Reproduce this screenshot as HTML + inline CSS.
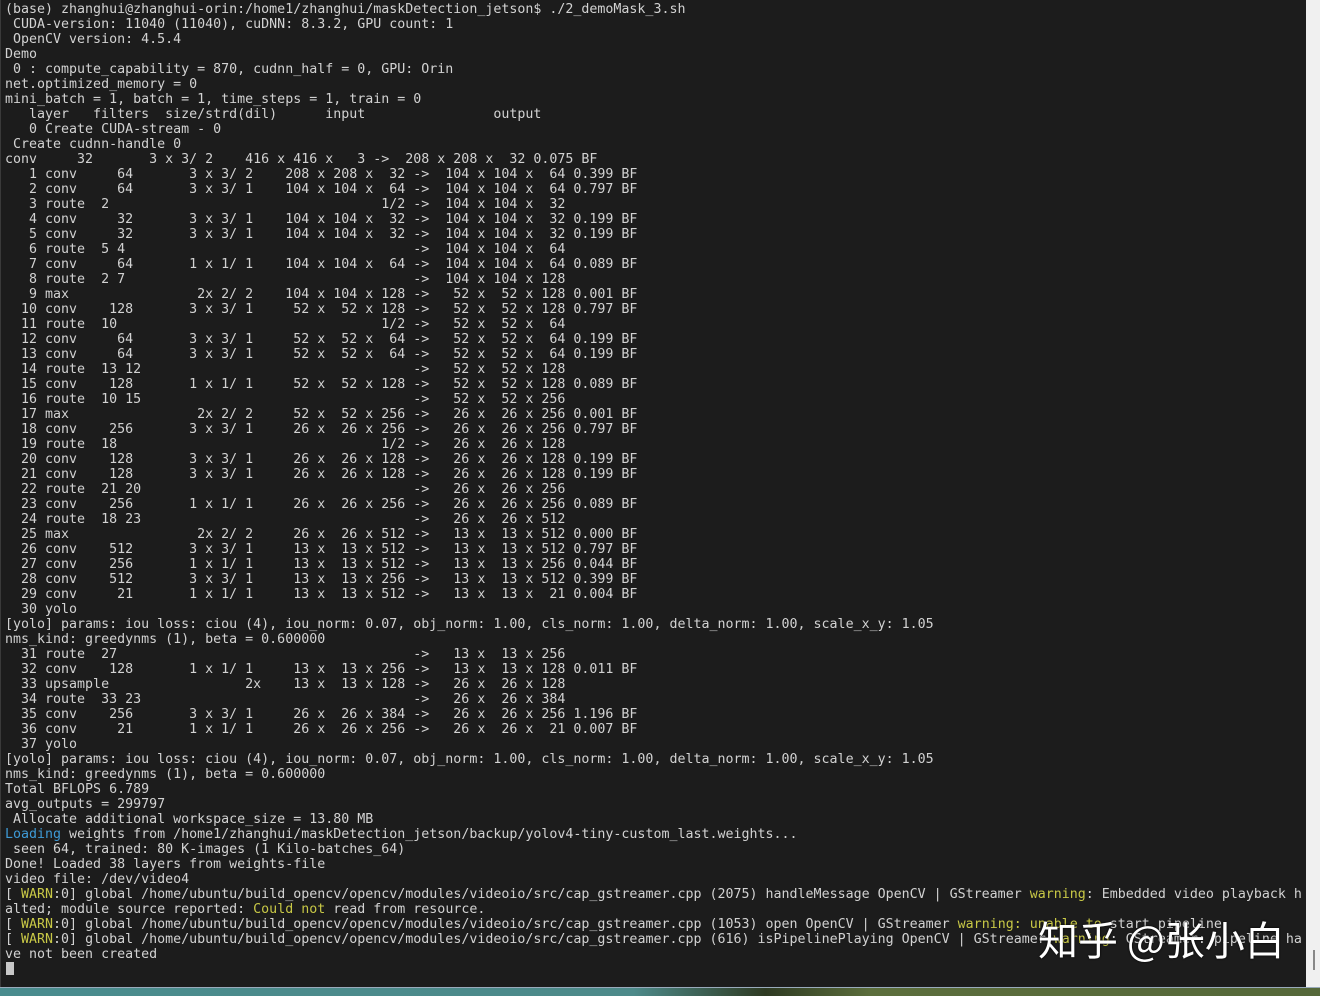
<!DOCTYPE html>
<html><head><meta charset="utf-8"><style>
html,body{margin:0;padding:0;background:#1c1c1c;width:1320px;height:995px;overflow:hidden}
#t{position:absolute;left:0;top:0;width:1306px;height:987px;background:#1c1c1c;border-left:1px solid #3a3a3a;box-sizing:border-box}
#c{position:absolute;left:4px;top:2px;font-family:"DejaVu Sans Mono","Liberation Mono",monospace;font-size:13.3px;line-height:15px;color:#d2d2d2;white-space:pre}
.l{position:relative;height:15px}
s{position:absolute;top:0;text-decoration:none}
.y{color:#c8c846}.b{color:#3e9ad6}
#sb{position:absolute;left:1306px;top:0;width:14px;height:987px;background:#f0f0f0}
#th{position:absolute;left:1313px;top:950px;width:2px;height:20px;background:#888}
#bot{position:absolute;left:0;top:987px;width:1320px;height:8px;background:linear-gradient(90deg,#4a8c8e 0,#4d8a8a 48%,#2e3a22 58%,#5c6e3c 66%,#55683a 100%);border-top:1px solid #9ab}
#cur{position:absolute;left:5px;top:962px;width:8px;height:13px;background:#c8c8c8}
#wm{position:absolute;left:1038px;top:909px;font-family:"Noto Sans CJK SC","WenQuanYi Zen Hei",sans-serif;font-size:40px;color:#fff;white-space:pre;text-shadow:0 0 2px #000}
</style></head><body>
<div id="t">
<div id="c"><div class="l">(base) zhanghui@zhanghui-orin:/home1/zhanghui/maskDetection_jetson$ ./2_demoMask_3.sh</div><div class="l"> CUDA-version: 11040 (11040), cuDNN: 8.3.2, GPU count: 1</div><div class="l"> OpenCV version: 4.5.4</div><div class="l">Demo</div><div class="l"> 0 : compute_capability = 870, cudnn_half = 0, GPU: Orin</div><div class="l">net.optimized_memory = 0</div><div class="l">mini_batch = 1, batch = 1, time_steps = 1, train = 0</div><div class="l">   layer<s style="left:11ch">filters</s><s style="left:20ch">size/strd(dil)</s><s style="left:40ch">input</s><s style="left:61ch">output</s></div><div class="l">   0 Create CUDA-stream - 0</div><div class="l"> Create cudnn-handle 0</div><div class="l">conv     32       3 x 3/ 2    416 x 416 x   3 ->  208 x 208 x  32 0.075 BF</div><div class="l">   1 conv     64       3 x 3/ 2    208 x 208 x  32 ->  104 x 104 x  64 0.399 BF</div><div class="l">   2 conv     64       3 x 3/ 1    104 x 104 x  64 ->  104 x 104 x  64 0.797 BF</div><div class="l">   3 route  2<s style="left:47ch">1/2 ->  104 x 104 x  32</s></div><div class="l">   4 conv     32       3 x 3/ 1    104 x 104 x  32 ->  104 x 104 x  32 0.199 BF</div><div class="l">   5 conv     32       3 x 3/ 1    104 x 104 x  32 ->  104 x 104 x  32 0.199 BF</div><div class="l">   6 route  5 4<s style="left:51ch">->  104 x 104 x  64</s></div><div class="l">   7 conv     64       1 x 1/ 1    104 x 104 x  64 ->  104 x 104 x  64 0.089 BF</div><div class="l">   8 route  2 7<s style="left:51ch">->  104 x 104 x 128</s></div><div class="l">   9 max<s style="left:24ch">2x 2/ 2    104 x 104 x 128 ->   52 x  52 x 128 0.001 BF</s></div><div class="l">  10 conv    128       3 x 3/ 1     52 x  52 x 128 ->   52 x  52 x 128 0.797 BF</div><div class="l">  11 route  10<s style="left:47ch">1/2 ->   52 x  52 x  64</s></div><div class="l">  12 conv     64       3 x 3/ 1     52 x  52 x  64 ->   52 x  52 x  64 0.199 BF</div><div class="l">  13 conv     64       3 x 3/ 1     52 x  52 x  64 ->   52 x  52 x  64 0.199 BF</div><div class="l">  14 route  13 12<s style="left:51ch">->   52 x  52 x 128</s></div><div class="l">  15 conv    128       1 x 1/ 1     52 x  52 x 128 ->   52 x  52 x 128 0.089 BF</div><div class="l">  16 route  10 15<s style="left:51ch">->   52 x  52 x 256</s></div><div class="l">  17 max<s style="left:24ch">2x 2/ 2     52 x  52 x 256 ->   26 x  26 x 256 0.001 BF</s></div><div class="l">  18 conv    256       3 x 3/ 1     26 x  26 x 256 ->   26 x  26 x 256 0.797 BF</div><div class="l">  19 route  18<s style="left:47ch">1/2 ->   26 x  26 x 128</s></div><div class="l">  20 conv    128       3 x 3/ 1     26 x  26 x 128 ->   26 x  26 x 128 0.199 BF</div><div class="l">  21 conv    128       3 x 3/ 1     26 x  26 x 128 ->   26 x  26 x 128 0.199 BF</div><div class="l">  22 route  21 20<s style="left:51ch">->   26 x  26 x 256</s></div><div class="l">  23 conv    256       1 x 1/ 1     26 x  26 x 256 ->   26 x  26 x 256 0.089 BF</div><div class="l">  24 route  18 23<s style="left:51ch">->   26 x  26 x 512</s></div><div class="l">  25 max<s style="left:24ch">2x 2/ 2     26 x  26 x 512 ->   13 x  13 x 512 0.000 BF</s></div><div class="l">  26 conv    512       3 x 3/ 1     13 x  13 x 512 ->   13 x  13 x 512 0.797 BF</div><div class="l">  27 conv    256       1 x 1/ 1     13 x  13 x 512 ->   13 x  13 x 256 0.044 BF</div><div class="l">  28 conv    512       3 x 3/ 1     13 x  13 x 256 ->   13 x  13 x 512 0.399 BF</div><div class="l">  29 conv     21       1 x 1/ 1     13 x  13 x 512 ->   13 x  13 x  21 0.004 BF</div><div class="l">  30 yolo</div><div class="l">[yolo] params: iou loss: ciou (4), iou_norm: 0.07, obj_norm: 1.00, cls_norm: 1.00, delta_norm: 1.00, scale_x_y: 1.05</div><div class="l">nms_kind: greedynms (1), beta = 0.600000</div><div class="l">  31 route  27<s style="left:51ch">->   13 x  13 x 256</s></div><div class="l">  32 conv    128       1 x 1/ 1     13 x  13 x 256 ->   13 x  13 x 128 0.011 BF</div><div class="l">  33 upsample<s style="left:30ch">2x    13 x  13 x 128 ->   26 x  26 x 128</s></div><div class="l">  34 route  33 23<s style="left:51ch">->   26 x  26 x 384</s></div><div class="l">  35 conv    256       3 x 3/ 1     26 x  26 x 384 ->   26 x  26 x 256 1.196 BF</div><div class="l">  36 conv     21       1 x 1/ 1     26 x  26 x 256 ->   26 x  26 x  21 0.007 BF</div><div class="l">  37 yolo</div><div class="l">[yolo] params: iou loss: ciou (4), iou_norm: 0.07, obj_norm: 1.00, cls_norm: 1.00, delta_norm: 1.00, scale_x_y: 1.05</div><div class="l">nms_kind: greedynms (1), beta = 0.600000</div><div class="l">Total BFLOPS 6.789</div><div class="l">avg_outputs = 299797</div><div class="l"> Allocate additional workspace_size = 13.80 MB</div><div class="l"><span class="b">Loading</span> weights from /home1/zhanghui/maskDetection_jetson/backup/yolov4-tiny-custom_last.weights...</div><div class="l"> seen 64, trained: 80 K-images (1 Kilo-batches_64)</div><div class="l">Done! Loaded 38 layers from weights-file</div><div class="l">video file: /dev/video4</div><div class="l">[ <span class="y">WARN</span>:0] global /home/ubuntu/build_opencv/opencv/modules/videoio/src/cap_gstreamer.cpp (2075) handleMessage OpenCV | GStreamer <span class="y">warning</span>: Embedded video playback h</div><div class="l">alted; module source reported: <span class="y">Could not</span> read from resource.</div><div class="l">[ <span class="y">WARN</span>:0] global /home/ubuntu/build_opencv/opencv/modules/videoio/src/cap_gstreamer.cpp (1053) open OpenCV | GStreamer <span class="y">warning: unable to</span> start pipeline</div><div class="l">[ <span class="y">WARN</span>:0] global /home/ubuntu/build_opencv/opencv/modules/videoio/src/cap_gstreamer.cpp (616) isPipelinePlaying OpenCV | GStreamer <span class="y">warning</span>: GStreamer: pipeline ha</div><div class="l">ve not been created</div></div>
<div id="cur"></div>
</div>
<div id="sb"></div><div id="th"></div>
<div id="bot"></div>
<div id="wm">知乎 @张小白</div>
</body></html>
